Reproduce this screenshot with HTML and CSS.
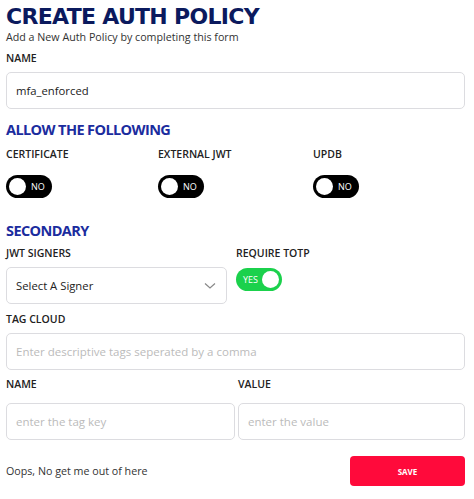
FILE: index.html
```html
<!DOCTYPE html>
<html>
<head>
<meta charset="utf-8">
<link rel="stylesheet" href="styles.css">
</head>
<body>
<div class="page">
  <h1 class="title">CREATE AUTH POLICY</h1>
  <p class="subtitle">Add a New Auth Policy by completing this form</p>

  <label class="label first">NAME</label>
  <div class="input"><span class="value">mfa_enforced</span></div>

  <h2 class="section">ALLOW THE FOLLOWING</h2>
  <div class="grid3">
    <div class="cell">
      <label class="label">CERTIFICATE</label>
      <div class="toggle off"><span class="knob"></span><span class="ttext">NO</span></div>
    </div>
    <div class="cell">
      <label class="label">EXTERNAL JWT</label>
      <div class="toggle off"><span class="knob"></span><span class="ttext">NO</span></div>
    </div>
    <div class="cell">
      <label class="label">UPDB</label>
      <div class="toggle off"><span class="knob"></span><span class="ttext">NO</span></div>
    </div>
  </div>

  <h2 class="section sec2">SECONDARY</h2>
  <div class="grid2">
    <div class="cell">
      <label class="label">JWT SIGNERS</label>
      <div class="input select"><span class="value">Select A Signer</span>
        <svg class="chev" width="12" height="8" viewBox="0 0 12 8"><path d="M1 1.5 L6 6 L11 1.5" fill="none" stroke="#888" stroke-width="1.2"/></svg>
      </div>
    </div>
    <div class="cell">
      <label class="label">REQUIRE TOTP</label>
      <div class="toggle on"><span class="ttext">YES</span><span class="knob"></span></div>
    </div>
  </div>

  <label class="label tag">TAG CLOUD</label>
  <div class="input"><span class="ph">Enter descriptive tags seperated by a comma</span></div>

  <div class="grid2b">
    <div class="cell">
      <label class="label">NAME</label>
      <div class="input"><span class="ph">enter the tag key</span></div>
    </div>
    <div class="cell">
      <label class="label">VALUE</label>
      <div class="input"><span class="ph">enter the value</span></div>
    </div>
  </div>

  <div class="footer">
    <span class="cancel">Oops, No get me out of here</span>
    <button class="save">SAVE</button>
  </div>
</div>
</body>
</html>
```
FILE: styles.css
```css
* { box-sizing: border-box; }
html, body { margin: 0; padding: 0; background: #fff; }
body { font-family: "Open Sans", "Liberation Sans", sans-serif; color: #222; }
.page { width: 459px; margin-left: 6px; padding-top: 5px; }
.title {
  margin: 0;
  font-family: "DejaVu Sans", sans-serif;
  font-weight: 900;
  font-size: 22px;
  line-height: 24px;
  color: #0b1a5e;
  letter-spacing: -0.7px;
}
.subtitle { margin: 0; font-size: 10.7px; line-height: 16px; color: #333; }
.label { display: block; font-size: 10.5px; font-weight: 600; line-height: 15px; color: #222; }
.label.first { margin-top: 6px; margin-bottom: 6px; }
.input {
  height: 37px;
  border: 1.5px solid #dcdce0;
  border-radius: 5px;
  display: flex;
  align-items: center;
  padding-left: 9px;
  font-size: 11.3px;
}
.value { color: #222; }
.ph { color: #bbb; font-size: 11.5px; }
.section {
  margin: 11px 0 0;
  font-size: 14.5px;
  font-weight: 700;
  line-height: 20px;
  color: #1b2c9e;
  letter-spacing: -0.6px;
}
.grid3 { display: grid; grid-template-columns: 152px 155px 1fr; margin-top: 7px; }
.grid3 .label { margin-bottom: 13px; }
.toggle {
  width: 46px; height: 23px; border-radius: 12px;
  display: flex; align-items: center; padding: 0 3px;
  font-size: 9px; color: #fff;
}
.toggle.off { background: #000; }
.toggle.on { background: #1bd14c; justify-content: space-between; padding-left: 7px; }
.knob { width: 17px; height: 17px; border-radius: 50%; background: #fff; }
.toggle.off .ttext { margin-left: 5px; }
.sec2 { margin-top: 23px; }
.grid2 { display: grid; grid-template-columns: 230px 1fr; margin-top: 5px; }
.grid2 .label { margin-bottom: 6px; }
.select { width: 221px; justify-content: space-between; padding-right: 10px; }
.grid2 .toggle { margin-top: 7px; }
.label.tag { margin-top: 8px; margin-bottom: 6px; }
.grid2b { display: grid; grid-template-columns: 229px 1fr; column-gap: 3px; margin-top: 7px; }
.grid2b .label { margin-bottom: 11px; }
.footer { display: flex; justify-content: space-between; align-items: center; margin-top: 16px; }
.cancel { font-size: 10.7px; color: #333; }
.save {
  width: 115px; height: 30px; border: none; border-radius: 4px;
  background: #ff0a3b; color: #fff; font-family: "Open Sans", sans-serif;
  font-size: 8px; font-weight: 700;
}
```
